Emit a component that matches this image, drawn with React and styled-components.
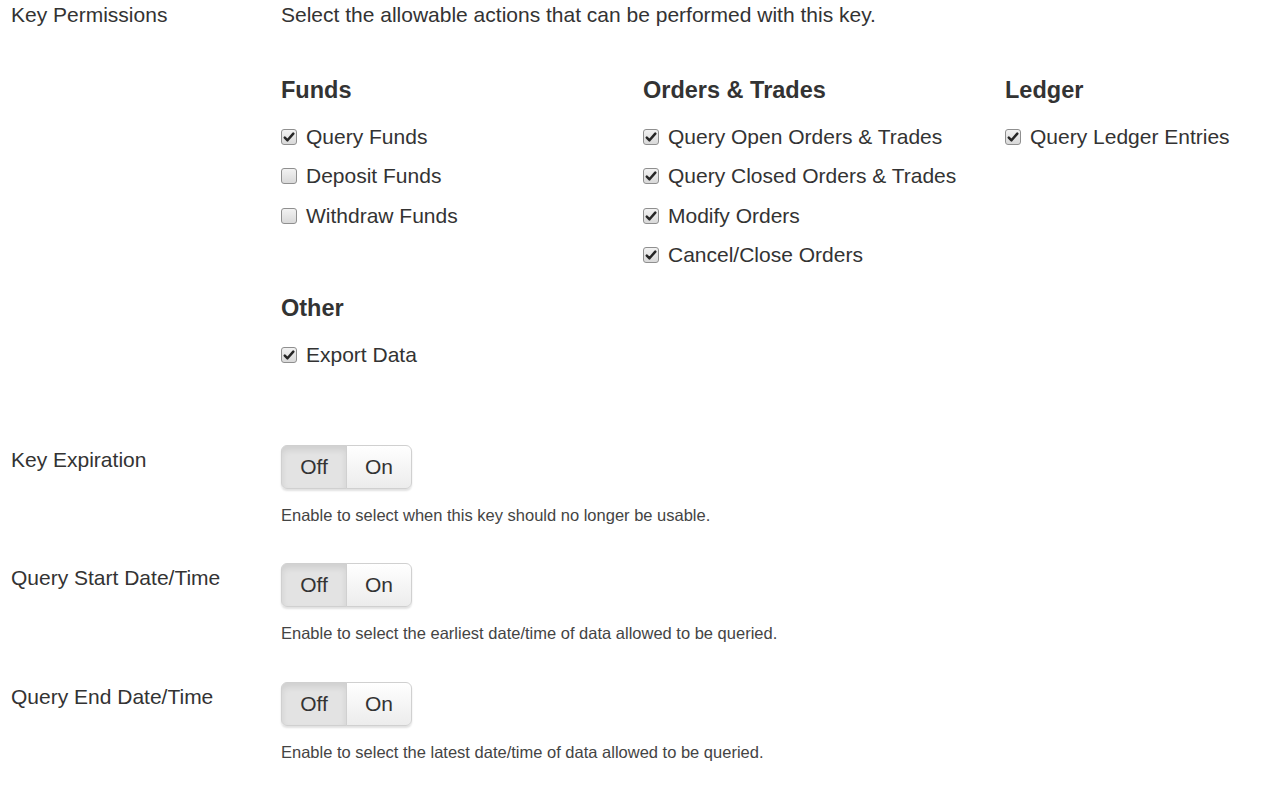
import styled, { createGlobalStyle } from 'styled-components';

const GlobalStyle = createGlobalStyle`
   body {
      margin: 0;
      background: #fff;
      color: #333;
      font-family: "Liberation Sans", Arial, sans-serif;
      font-size: 21px;
      line-height: 30px;
   }
`;

const Page = styled.div`
   display: flex;
   flex-direction: column;
`;

const FormRow = styled.div`
   display: flex;
   margin-bottom: ${(props) => props.$gap || 0}px;
`;

const RowLabel = styled.div`
   width: 281px;
   padding-left: 11px;
   box-sizing: border-box;
   flex: none;
   margin-top: ${(props) => props.$nudge || 0}px;
`;

const RowBody = styled.div`
   flex: 1;
   min-width: 0;
   display: flex;
   flex-direction: column;
`;

const Intro = styled.p`
   margin: 0 0 48px;
`;

const Groups = styled.div`
   display: grid;
   grid-template-columns: 362px 362px auto;
   row-gap: 17px;
`;

const Group = styled.div`
   display: flex;
   flex-direction: column;
`;

const GroupTitle = styled.h4`
   margin: -1px 0 19px;
   font-size: 23.5px;
   line-height: 26px;
   font-weight: bold;
`;

const CheckRow = styled.label`
   display: flex;
   align-items: center;
   gap: 9px;
   height: 30px;
   margin-bottom: 9.33px;
   white-space: nowrap;
`;

const Box = styled.span`
   width: 16px;
   height: 16px;
   box-sizing: border-box;
   border: 1px solid #8f8f8f;
   border-radius: 3px;
   background: linear-gradient(#f2f2f2, #d9d9d9);
   display: flex;
   align-items: center;
   justify-content: center;
   flex: none;
`;

const Toggle = styled.div`
   display: flex;
   width: 131px;
   height: 44px;
   border-radius: 6px;
   box-shadow: 0 2px 2px rgba(0, 0, 0, 0.12);
`;

const ToggleButton = styled.button`
   flex: none;
   width: ${(props) => props.$w}px;
   height: 44px;
   padding: 0;
   font-family: inherit;
   font-size: 21px;
   color: #333;
   border: 1px solid #d0d0d0;
   background: ${(props) =>
      props.$active ? '#e3e3e3' : 'linear-gradient(#ffffff, #ececec)'};
   box-shadow: ${(props) =>
      props.$active ? 'inset 0 4px 6px rgba(0, 0, 0, 0.09)' : 'none'};
   border-radius: ${(props) => (props.$first ? '6px 0 0 6px' : '0 6px 6px 0')};
   margin-left: ${(props) => (props.$first ? 0 : -1)}px;
`;

const Help = styled.p`
   margin: 15px 0 0;
   font-size: 16.5px;
   line-height: 23.5px;
   color: #444;
`;

const groups = [
   {
      title: 'Funds',
      items: [
         ['Query Funds', true],
         ['Deposit Funds', false],
         ['Withdraw Funds', false],
      ],
   },
   {
      title: 'Orders & Trades',
      items: [
         ['Query Open Orders & Trades', true],
         ['Query Closed Orders & Trades', true],
         ['Modify Orders', true],
         ['Cancel/Close Orders', true],
      ],
   },
   {
      title: 'Ledger',
      items: [['Query Ledger Entries', true]],
   },
   {
      title: 'Other',
      items: [['Export Data', true]],
   },
];

const toggles = [
   ['Key Expiration', 'Enable to select when this key should no longer be usable.'],
   ['Query Start Date/Time', 'Enable to select the earliest date/time of data allowed to be queried.'],
   ['Query End Date/Time', 'Enable to select the latest date/time of data allowed to be queried.'],
];

function Checkbox({ checked }) {
   return (
      <Box>
         {checked && (
            <svg width="12" height="12" viewBox="0 0 12 12">
               <path
                  d="M1.8 6.6 L4.5 9.3 L10.3 2.6"
                  fill="none"
                  stroke="#262626"
                  strokeWidth="2.5"
                  strokeLinecap="round"
                  strokeLinejoin="round"
               />
            </svg>
         )}
      </Box>
   );
}

function App() {
   return (
      <Page>
         <GlobalStyle />
         <FormRow $gap={65}>
            <RowLabel>Key Permissions</RowLabel>
            <RowBody>
               <Intro>
                  Select the allowable actions that can be performed with this key.
               </Intro>
               <Groups>
                  {groups.map((g) => (
                     <Group key={g.title}>
                        <GroupTitle>{g.title}</GroupTitle>
                        {g.items.map(([text, checked]) => (
                           <CheckRow key={text}>
                              <Checkbox checked={checked} />
                              {text}
                           </CheckRow>
                        ))}
                     </Group>
                  ))}
               </Groups>
            </RowBody>
         </FormRow>
         {toggles.map(([label, help]) => (
            <FormRow key={label} $gap={36}>
               <RowLabel $nudge={0}>{label}</RowLabel>
               <RowBody>
                  <Toggle>
                     <ToggleButton $first $active $w={66}>
                        Off
                     </ToggleButton>
                     <ToggleButton $w={66}>On</ToggleButton>
                  </Toggle>
                  <Help>{help}</Help>
               </RowBody>
            </FormRow>
         ))}
      </Page>
   );
}

export default App;
